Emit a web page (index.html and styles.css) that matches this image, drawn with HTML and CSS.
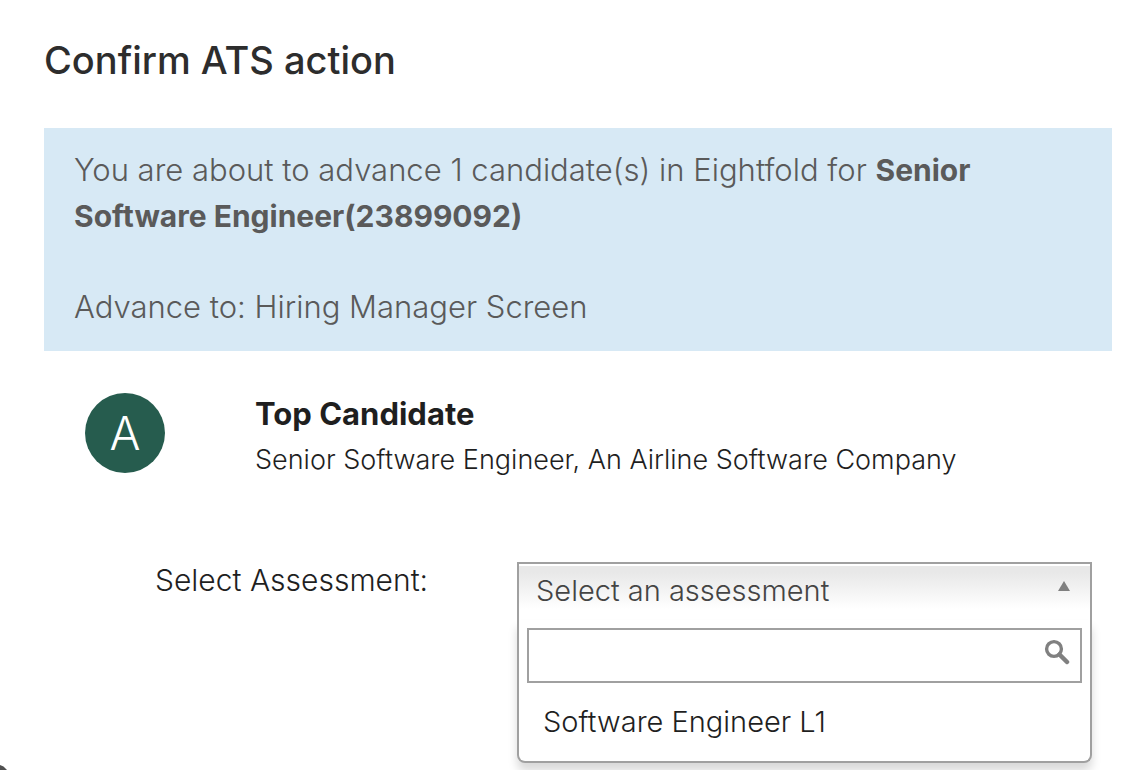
FILE: index.html
```
<!doctype html>
<html lang="en">
<head>
    <meta charset="UTF-8">
    <meta name="viewport" content="width=device-width, initial-scale=1.0">
    <title>Confirm ATS action</title>
    <link rel="stylesheet" href="styles.css">
</head>
<body>
    <main class="dialog">
        <h1 class="dialog-title">Confirm ATS action</h1>

        <div class="notice">
            <p>You are about to advance 1 candidate(s) in Eightfold for <strong>Senior Software Engineer(23899092)</strong></p>
            <p class="notice-stage">Advance to: Hiring Manager Screen</p>
        </div>

        <div class="candidate">
            <div class="avatar">A</div>
            <div class="candidate-info">
                <h2 class="candidate-name">Top Candidate</h2>
                <p class="candidate-role">Senior Software Engineer, An Airline Software Company</p>
            </div>
        </div>

        <div class="field">
            <label class="field-label" for="assessment">Select Assessment:</label>
            <div class="picker">
                <button class="picker-toggle" id="assessment" type="button" aria-haspopup="listbox" aria-expanded="true">
                    <span>Select an assessment</span>
                    <svg class="picker-arrow" viewBox="0 0 12 10" aria-hidden="true"><path d="M6 0L12 10H0Z"/></svg>
                </button>
                <div class="picker-drop">
                    <div class="picker-search">
                        <input class="picker-input" type="text" aria-label="Search assessments" autocomplete="off">
                        <svg class="picker-icon" viewBox="0 0 26 26" aria-hidden="true">
                            <circle cx="10" cy="10" r="7.4"/>
                            <path d="M15.5 15.5L23 23"/>
                        </svg>
                    </div>
                    <ul class="picker-list" role="listbox" aria-label="Assessments">
                        <li class="picker-option" role="option">Software Engineer L1</li>
                    </ul>
                </div>
            </div>
        </div>
    </main>
</body>
</html>
```
FILE: styles.css
```
* {
    margin: 0;
    padding: 0;
    box-sizing: border-box;
}

body {
    background: #fff;
    color: #1f1f1f;
    font-family: Inter, "Open Sans", sans-serif;
    font-size: 29px;
    font-weight: 300;
}

.dialog {
    position: relative;
    min-height: 100vh;
    padding: 35px 36px 7px 44px;
    overflow: hidden;
}

/* page backdrop behind the lower left corner */
.dialog::after {
    content: "";
    position: absolute;
    left: 0;
    bottom: 0;
    width: 7px;
    height: 5px;
    background: #505050;
    clip-path: polygon(0 0, 50% 30%, 100% 100%, 0 100%);
}

.dialog-title {
    margin-bottom: 43px;
    color: #2d2d2d;
    font-size: 38px;
    font-weight: 500;
    line-height: 50px;
}

.notice {
    padding: 19px 30px 20px;
    background: #d7e9f5;
    color: #5a5a5a;
    font-size: 31px;
    line-height: 46px;
}

.notice strong {
    font-size: 30px;
    font-weight: 700;
    line-height: 1;
}

.notice-stage {
    margin-top: 45px;
    padding-bottom: 1px;
}

.candidate {
    display: flex;
    gap: 90px;
    padding: 42px 41px 0;
}

.avatar {
    flex: none;
    width: 80px;
    height: 80px;
    border-radius: 50%;
    background: #265c4e;
    color: #fff;
    font-size: 46px;
    line-height: 80px;
    text-align: center;
}

.candidate-name {
    font-size: 31px;
    font-weight: 700;
    line-height: 42px;
}

.candidate-role {
    font-size: 27px;
    line-height: 50px;
}

.field {
    display: flex;
    justify-content: space-between;
    align-items: flex-start;
    gap: 20px;
    padding: 77px 20px 0 111px;
}

.field-label {
    font-size: 30px;
    line-height: 36px;
}

.picker {
    flex: 0 1 575px;
    color: #444;
}

.picker-toggle {
    display: flex;
    justify-content: space-between;
    align-items: center;
    width: 100%;
    height: 58px;
    padding: 0 20px 4px 17px;
    border: 2px solid #a0a0a0;
    border-bottom: 0;
    background: linear-gradient(#e8e8e8 15%, #fff 80%);
    box-shadow: inset 0 2px 0 #fff;
    color: inherit;
    font: inherit;
    text-align: left;
}

.picker-arrow {
    width: 12px;
    height: 10px;
    margin-bottom: 8px;
    fill: #808080;
}

.picker-drop {
    padding: 8px 8px 0;
    border: 2px solid #a0a0a0;
    border-top: 0;
    border-radius: 0 0 8px 8px;
    background: #fff;
    box-shadow: 0 8px 10px rgba(0, 0, 0, 0.15);
}

.picker-search {
    position: relative;
}

.picker-input {
    display: block;
    width: 100%;
    height: 55px;
    padding: 0 50px 0 10px;
    border: 2px solid #a0a0a0;
    background: #fff;
    font: inherit;
    outline: 0;
}

.picker-icon {
    position: absolute;
    top: 11px;
    right: 12px;
    width: 26px;
    height: 26px;
    fill: none;
    stroke: #808080;
    stroke-width: 3.4;
    stroke-linecap: round;
}

.picker-icon path {
    stroke-width: 4.5;
}

.picker-list {
    padding: 21px 16px;
    color: #1f1f1f;
    list-style: none;
}

.picker-option {
    line-height: 36px;
}
```
